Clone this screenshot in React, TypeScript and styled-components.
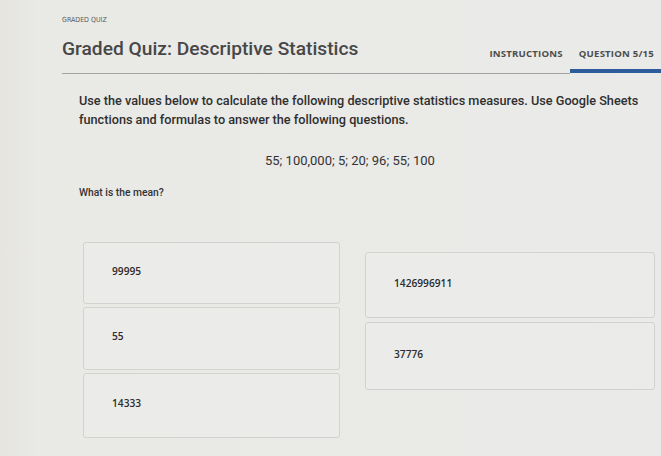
import React from "react";
import styled, { createGlobalStyle } from "styled-components";

const Global = createGlobalStyle`
  html, body { margin: 0; padding: 0; background: #e8e8e5; }
  body { font-family: Roboto, "Open Sans", sans-serif; color: #3a3a3a; }
  * { box-sizing: border-box; }
`;

const Page = styled.div`
  width: 661px;
  height: 456px;
  overflow: hidden;
  background: linear-gradient(90deg, #e6e5e0 0px, #e9e9e6 40px, #eaeae8 100%);
  padding: 15px 0 0 62px;
`;

const Eyebrow = styled.div`
  font-family: "DejaVu Sans Condensed", "DejaVu Sans", sans-serif;
  font-size: 7px;
  color: #5a5a5a;
  height: 10px;
  line-height: 10px;
`;

const HeaderRow = styled.div`
  display: flex;
  align-items: flex-end;
  justify-content: space-between;
  margin-top: 9px;
  height: 26px;
  padding-right: 7px;
`;

const Title = styled.h1`
  margin: 0;
  font-family: Roboto, sans-serif;
  font-weight: 500;
  font-size: 19.2px;
  color: #474747;
  line-height: 22px;
`;

const Tabs = styled.div`
  display: flex;
  gap: 16px;
`;

const Tab = styled.span`
  font-family: "Open Sans", sans-serif;
  font-weight: 700;
  font-size: 9.6px;
  letter-spacing: 0.2px;
  color: #4d4d4d;
  line-height: 12px;
`;

const DividerRow = styled.div`
  display: flex;
  align-items: flex-end;
  margin-top: 8px;
  height: 6px;
`;

const Rule = styled.div`
  flex: 1;
  height: 1px;
  background: #a3a3a3;
`;

const ActiveBar = styled.div`
  width: 91px;
  height: 4px;
  margin-bottom: 1px;
  background: #2d5b9b;
`;

const Content = styled.div`
  padding: 18px 0 0 17px;
`;

const Prompt = styled.p`
  margin: 0;
  font-family: Roboto, sans-serif;
  font-weight: 500;
  font-size: 12.7px;
  line-height: 18.5px;
  color: #2f2f2f;
  width: 572px;
`;

const Values = styled.div`
  margin-top: 24px;
  padding-left: 186px;
  font-family: Roboto, sans-serif;
  font-size: 13px;
  color: #333;
  line-height: 15px;
`;

const Question = styled.div`
  margin-top: 19px;
  font-family: Roboto, sans-serif;
  font-weight: 500;
  font-size: 10.3px;
  color: #333;
  line-height: 12px;
`;

const Options = styled.div`
  display: flex;
  gap: 25px;
  margin-top: 43px;
  margin-left: 4px;
`;

const Column = styled.div<{ $offset: number; $width: number; $gap: number }>`
  display: flex;
  flex-direction: column;
  gap: ${p => p.$gap}px;
  padding-top: ${p => p.$offset}px;
  width: ${p => p.$width}px;
`;

const Card = styled.div<{ $h: number }>`
  height: ${p => p.$h}px;
  display: flex;
  align-items: center;
  padding: 0 28px 5px;
  border: 1px solid #d2d2cf;
  border-radius: 3px;
  background: #ebebe9;
  font-family: "Open Sans", sans-serif;
  font-weight: 600;
  font-size: 10.2px;
  color: #2c2c2c;
`;

export default function App() {
  return (
    <>
      <Global />
      <Page>
        <Eyebrow>GRADED QUIZ</Eyebrow>
        <HeaderRow>
          <Title>Graded Quiz: Descriptive Statistics</Title>
          <Tabs>
            <Tab>INSTRUCTIONS</Tab>
            <Tab>QUESTION 5/15</Tab>
          </Tabs>
        </HeaderRow>
        <DividerRow>
          <Rule />
          <ActiveBar />
        </DividerRow>
        <Content>
          <Prompt>
            Use the values below to calculate the following descriptive statistics measures. Use Google Sheets
            functions and formulas to answer the following questions.
          </Prompt>
          <Values>55; 100,000; 5; 20; 96; 55; 100</Values>
          <Question>What is the mean?</Question>
          <Options>
            <Column $offset={0} $width={257} $gap={3}>
              <Card $h={62}>99995</Card>
              <Card $h={63}>55</Card>
              <Card $h={65}>14333</Card>
            </Column>
            <Column $offset={10} $width={290} $gap={4}>
              <Card $h={66}>1426996911</Card>
              <Card $h={68}>37776</Card>
            </Column>
          </Options>
        </Content>
      </Page>
    </>
  );
}
